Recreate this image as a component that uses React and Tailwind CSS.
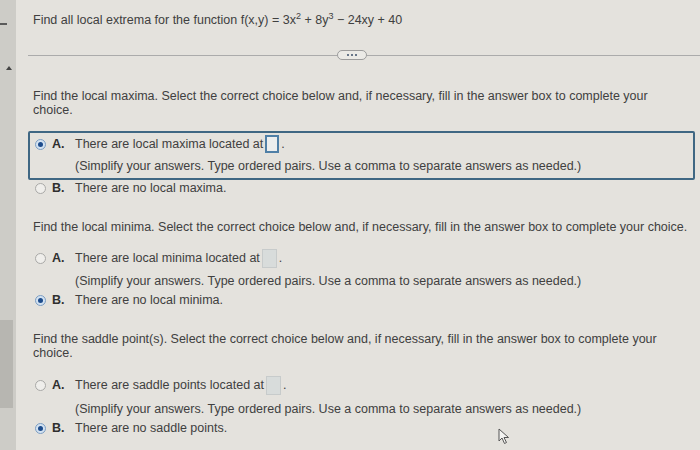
import React from "react";

function Radio({ on }) {
  return on ? (
    <span className="flex w-[11px] h-[11px] shrink-0 items-center justify-center rounded-full border border-[#7d9ec2] bg-[#d3e2f1]">
      <span className="block w-[5px] h-[5px] rounded-full bg-[#1d4c8c]" />
    </span>
  ) : (
    <span className="block w-[11px] h-[11px] shrink-0 rounded-full border border-[#a9a9a7] bg-[#efeeeb]" />
  );
}

function Row({ on, label, children, tall, className = "" }) {
  return (
    <div className={`flex items-center whitespace-nowrap ${tall ? "h-[20px]" : "h-[14px]"} ${className}`}>
      <span className="ml-[2px]"><Radio on={on} /></span>
      <span className="ml-[6px] w-[23px] font-bold text-[#2f2f2f]">{label}</span>
      {children}
    </div>
  );
}

function AnsBox({ active }) {
  return active ? (
    <span className="ml-[2px] block w-[14px] h-[18px] border-2 border-[#4f7fa6] bg-[#eceeee]" />
  ) : (
    <span className="ml-[2px] block w-[15px] h-[19px] border border-[#c7cbcb] bg-[#d8dcdb]" />
  );
}

function Simplify({ className = "" }) {
  return (
    <div className={`h-[14px] flex items-center pl-[42px] whitespace-nowrap ${className}`}>
      (Simplify your answers. Type ordered pairs. Use a comma to separate answers as needed.)
    </div>
  );
}

export default function App() {
  return (
    <div
      className="relative flex w-[700px] h-[450px] overflow-hidden bg-[#e4e2dd] text-[12.5px] leading-[14px] text-[#404040]"
      style={{ fontFamily: '"Liberation Sans", Arial, sans-serif' }}
    >
      {/* left strip */}
      <div className="flex flex-col w-[16px] shrink-0 bg-[#cdccc7]">
        <div className="mt-[23px] h-[2px] w-[7px] bg-[#5a5a5a]" />
        <svg className="ml-[6px] mt-[41px]" width="6" height="4" viewBox="0 0 6 4">
          <path d="M0 4 L3 0 L6 4 Z" fill="#444" />
        </svg>
        <div className="mt-[250px] h-[88px] w-[13px] bg-[#b7b6b1]" />
      </div>

      {/* main */}
      <div className="flex-1 flex flex-col pl-[17px]">
        <div className="pt-[13px] h-[27px] whitespace-nowrap">
          Find all local extrema for the function f(x,y) = 3x
          <sup className="text-[9px] relative -top-[5px]">2</sup> + 8y
          <sup className="text-[9px] relative -top-[5px]">3</sup> − 24xy + 40
        </div>

        <div className="mt-[23px] -ml-[5px] flex items-center h-[10px]">
          <div className="w-[309px] h-px bg-[#ababab]" />
          <div className="flex w-[30px] h-[10px] items-center justify-center gap-[2px] rounded-full border border-[#9c9c9c] bg-[#ebeae6]">
            <span className="block w-[2px] h-[2px] rounded-full bg-[#3c4f6a]" />
            <span className="block w-[2px] h-[2px] rounded-full bg-[#3c4f6a]" />
            <span className="block w-[2px] h-[2px] rounded-full bg-[#3c4f6a]" />
          </div>
          <div className="flex-1 h-px bg-[#ababab]" />
        </div>

        <p className="mt-[29px] leading-[14px] whitespace-nowrap">
          Find the local maxima. Select the correct choice below and, if necessary, fill in the answer box to complete your
          <br />
          choice.
        </p>

        <div className="mt-[14px] -ml-[5px] mr-[5px] border-2 border-[#3f6783] rounded-[2px] pl-[3px] pt-[1px] pb-[5px]">
          <Row on label="A." tall>
            <span>There are local maxima located at</span>
            <AnsBox active />
            <span className="ml-[2px]">.</span>
          </Row>
          <Simplify className="mt-[5px]" />
        </div>
        <Row label="B." className="mt-[1px]">There are no local maxima.</Row>

        <p className="mt-[25px] h-[14px] whitespace-nowrap">
          Find the local minima. Select the correct choice below and, if necessary, fill in the answer box to complete your choice.
        </p>
        <Row label="A." tall className="mt-[14px]">
          <span>There are local minima located at</span>
          <AnsBox />
          <span className="ml-[2px]">.</span>
        </Row>
        <Simplify className="mt-[6px]" />
        <Row on label="B." className="mt-[5px]">There are no local minima.</Row>

        <p className="mt-[25px] leading-[14px] whitespace-nowrap">
          Find the saddle point(s). Select the correct choice below and, if necessary, fill in the answer box to complete your
          <br />
          choice.
        </p>
        <Row label="A." tall className="mt-[15px]">
          <span>There are saddle points located at</span>
          <AnsBox />
          <span className="ml-[2px]">.</span>
        </Row>
        <Simplify className="mt-[7px]" />
        <Row on label="B." className="mt-[5px]">There are no saddle points.</Row>
      </div>

      {/* mouse cursor */}
      <svg className="absolute left-[498px] top-[428px]" width="12" height="17" viewBox="0 0 12 17">
        <path d="M1 1 L1 13 L4 10 L6.5 15.5 L8.5 14.5 L6 9.5 L10.5 9.5 Z" fill="#f4f4f2" stroke="#555" strokeWidth="1" strokeLinejoin="round" />
      </svg>
    </div>
  );
}
